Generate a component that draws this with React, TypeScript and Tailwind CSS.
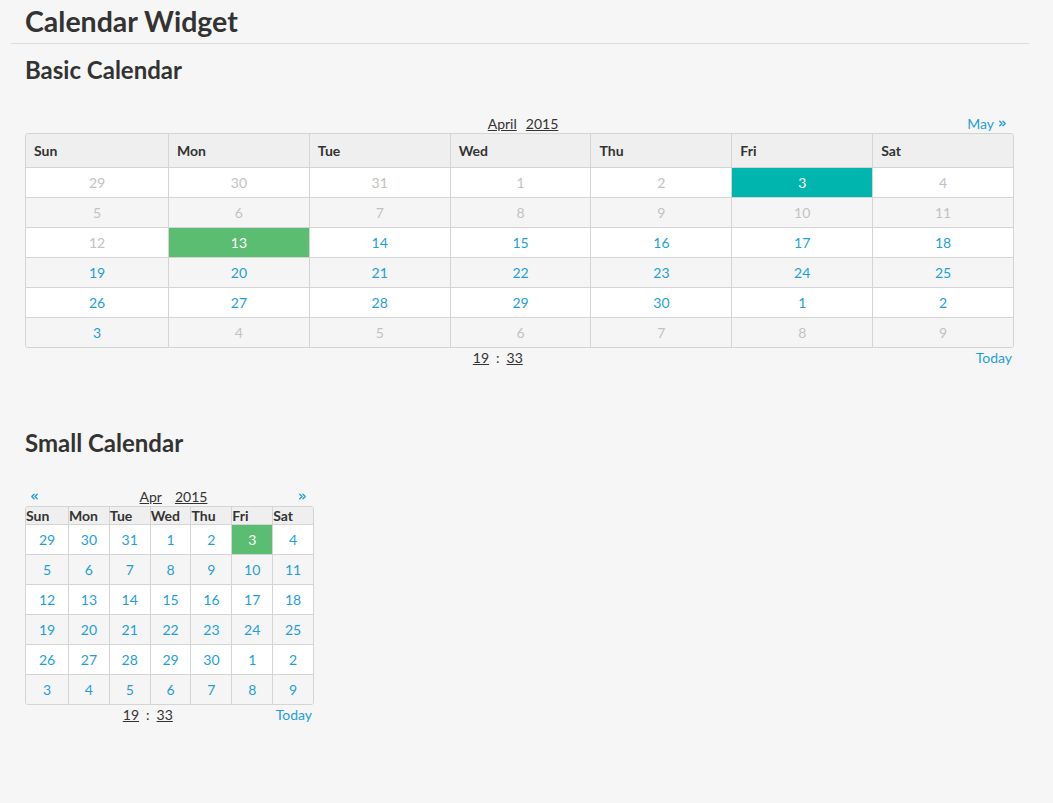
import React from "react";
import { ChevronsLeft, ChevronsRight } from "lucide-react";

type Cell = { d: number; tone: "muted" | "link" | "teal" | "green" };

const days = ["Sun", "Mon", "Tue", "Wed", "Thu", "Fri", "Sat"];

const m = (d: number): Cell => ({ d, tone: "muted" });
const l = (d: number): Cell => ({ d, tone: "link" });

// big calendar, april 2015
const basicRows: Cell[][] = [
  [m(29), m(30), m(31), m(1), m(2), { d: 3, tone: "teal" }, m(4)],
  [m(5), m(6), m(7), m(8), m(9), m(10), m(11)],
  [m(12), { d: 13, tone: "green" }, l(14), l(15), l(16), l(17), l(18)],
  [l(19), l(20), l(21), l(22), l(23), l(24), l(25)],
  [l(26), l(27), l(28), l(29), l(30), l(1), l(2)],
  [l(3), m(4), m(5), m(6), m(7), m(8), m(9)],
];

const smallRows: Cell[][] = [
  [l(29), l(30), l(31), l(1), l(2), { d: 3, tone: "green" }, l(4)],
  [l(5), l(6), l(7), l(8), l(9), l(10), l(11)],
  [l(12), l(13), l(14), l(15), l(16), l(17), l(18)],
  [l(19), l(20), l(21), l(22), l(23), l(24), l(25)],
  [l(26), l(27), l(28), l(29), l(30), l(1), l(2)],
  [l(3), l(4), l(5), l(6), l(7), l(8), l(9)],
];

const toneClass = (tone: Cell["tone"]) => {
  switch (tone) {
    case "teal":
      return "bg-[#00b5ad] text-white";
    case "green":
      return "bg-[#5bbd72] text-white";
    case "link":
      return "text-[#1e9fd9]";
    default:
      return "text-[#c2c2c2]";
  }
};

const Calendar = ({
  rows,
  small,
  month,
}: {
  rows: Cell[][];
  small?: boolean;
  month: string;
}) => {
  const cols = small
    ? "grid-cols-[42px_repeat(6,1fr)]"
    : "grid-cols-[142px_repeat(6,1fr)]";

  return (
    <div className={small ? "w-[289px]" : "w-[989px]"}>
      {/* month / year header */}
      <div className="grid grid-cols-[1fr_auto_1fr] items-center h-[19px] text-[14px] leading-[19px]">
        <div className="pl-[4px] text-[#1e9fd9]">
          {small && <ChevronsLeft size={11} strokeWidth={3} />}
        </div>
        <div
          className={
            small
              ? "flex gap-[13px] ml-[8px] text-[#333]"
              : "flex gap-[9px] ml-[7px] text-[#333]"
          }
        >
          <span className="underline">{month}</span>
          <span className="underline">2015</span>
        </div>
        <div className="flex justify-end items-center pr-[6px] text-[#1e9fd9]">
          {!small && <span className="mr-[3px]">May</span>}
          <ChevronsRight size={11} strokeWidth={3} />
        </div>
      </div>

      {/* the grid */}
      <div className="border border-[#d4d4d4] rounded-[3px] overflow-hidden">
        <div
          className={`grid ${cols} bg-[#efefef] ${
            small ? "h-[17px]" : "h-[33px]"
          }`}
        >
          {days.map((d, i) => (
            <div
              key={d}
              className={`font-bold text-[14px] text-[#333] flex items-center ${
                small ? "leading-[17px]" : "pl-[8px]"
              } ${i > 0 ? "border-l border-[#d4d4d4]" : ""}`}
            >
              {d}
            </div>
          ))}
        </div>
        {rows.map((row, r) => (
          <div
            key={r}
            className={`grid ${cols} h-[30px] border-t border-[#d4d4d4] ${
              r % 2 === 0 ? "bg-white" : "bg-[#f5f5f5]"
            }`}
          >
            {row.map((c, i) => (
              <div
                key={i}
                className={`flex items-center justify-center text-[14px] ${toneClass(
                  c.tone
                )} ${i > 0 ? "border-l border-[#d4d4d4]" : ""}`}
              >
                {c.d}
              </div>
            ))}
          </div>
        ))}
      </div>

      {/* time footer */}
      <div className="flex items-center h-[20px] text-[14px] leading-[20px]">
        <div className="flex-1 flex justify-center gap-[7px] pr-[5px] text-[#333]">
          <span className="underline">19</span>
          <span>:</span>
          <span className="underline">33</span>
        </div>
        <div className="text-[#1e9fd9] pr-[2px]">Today</div>
      </div>
    </div>
  );
};

const App = () => {
  return (
    <div
      className="min-h-[803px] bg-[#f6f6f6] text-[#333]"
      style={{ fontFamily: "Lato, 'Open Sans', sans-serif" }}
    >
      <div className="ml-[11px] w-[1018px]">
        <h1 className="pl-[14px] pt-[3px] pb-[4px] text-[28.5px] leading-[36px] font-bold text-[#333] border-b border-[#dcdcdc]">
          Calendar Widget
        </h1>
        <div className="px-[14px]">
          <h2 className="mt-[11px] text-[24px] leading-[30px] font-bold">
            Basic Calendar
          </h2>
          <div className="mt-[29px]">
            <Calendar rows={basicRows} month="April" />
          </div>

          <h2 className="mt-[60px] text-[24px] leading-[30px] font-bold">
            Small Calendar
          </h2>
          <div className="mt-[29px]">
            <Calendar rows={smallRows} small month="Apr" />
          </div>
        </div>
      </div>
    </div>
  );
};

export default App;
